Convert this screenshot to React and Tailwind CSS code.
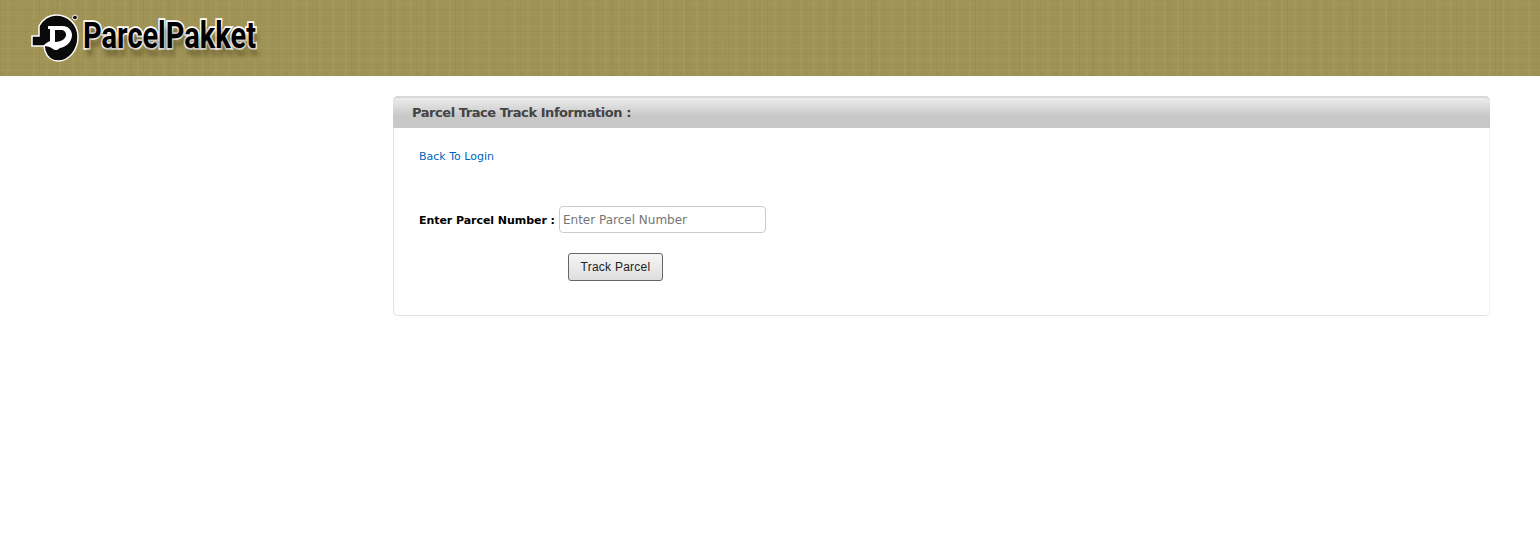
export default function App() {
  return (
    <div className="min-h-[543px] bg-white font-['DejaVu_Sans',sans-serif]">
      <header className="flex h-[76px] items-start bg-[#a09356] bg-[repeating-linear-gradient(90deg,rgba(70,60,20,0.04)_0px,rgba(70,60,20,0.04)_1px,transparent_1px,transparent_7px,rgba(255,245,190,0.04)_7px,rgba(255,245,190,0.04)_9px,transparent_9px,transparent_13px),repeating-linear-gradient(90deg,transparent_0px,transparent_19px,rgba(70,60,20,0.025)_19px,rgba(70,60,20,0.025)_22px,transparent_22px,transparent_37px),repeating-linear-gradient(0deg,rgba(70,60,20,0.04)_0px,rgba(70,60,20,0.04)_1px,transparent_1px,transparent_5px,rgba(255,245,190,0.04)_5px,rgba(255,245,190,0.04)_6px,transparent_6px,transparent_11px)] pl-[31px] pt-[13px]">
        <svg width="50" height="50" viewBox="0 0 50 50" className="shrink-0">
          <circle cx="44" cy="4.5" r="2.4" fill="#111" stroke="#fff" strokeWidth="1" />
          <path
            d="M8 13C12 6 18 2 25 2C37 2 47 11 47 24C47 37 38 48 27 48C21 48 16 44 14 38L13 33H1V23H8Z"
            fill="#0a0a0a"
            stroke="#fff"
            strokeWidth="1.5"
          />
          <path
            d="M17 13H32C37 13 41 17 41 22C41 29 35 34 29 35C27 37 24 38 22 36C20 34 16 33 12 33C15 30 17 29 19 28V16H17Z"
            fill="#fff"
          />
          <path d="M24 17H30C33 17 35 19 35 22C35 25 31 29 24 29Z" fill="#0a0a0a" />
        </svg>
        <span className="mt-[1px] ml-[2px] inline-block origin-left scale-x-[0.805] text-[36px] leading-[44px] font-bold whitespace-nowrap text-black font-['Roboto',sans-serif] [paint-order:stroke_fill] [-webkit-text-stroke:3.5px_#fff] [text-shadow:3px_8px_5px_rgba(50,40,10,0.4)]">
          ParcelPakket
        </span>
      </header>

      <main className="pt-[20px] pr-[50px] pl-[393px]">
        <section className="h-[220px] rounded-[5px] border border-[#e2e2e2] border-r-[#f2f2f2]">
          <h2 className="-mx-px -mt-px h-[32px] rounded-t-[5px] border-t-2 border-[#d8d8d8] bg-[linear-gradient(#ececec,#c8c8c8_60%,#c8c8c8)] pl-[19px] text-[13px] leading-[29px] font-bold tracking-[-0.44px] text-[#444]">
            Parcel Trace Track Information :
          </h2>
          <div className="pl-[25px]">
            <a href="#" className="mt-[22px] block text-[11px] leading-[14px] text-[#0066bb]">
              Back To Login
            </a>
            <div className="mt-[42px] flex items-center">
              <label className="pt-[3px] text-[11px] font-bold tracking-[-0.05px] text-black">Enter Parcel Number :</label>
              <input
                placeholder="Enter Parcel Number"
                className="ml-[4px] h-[27px] w-[207px] rounded-[4px] border border-[#cccccc] px-[3px] text-[12px] outline-none placeholder:text-[#757575]"
              />
            </div>
            <button className="mt-[20px] ml-[149px] block h-[28px] w-[95px] rounded-[3px] border border-[#666] bg-[linear-gradient(#f6f6f6,#dedede)] font-['Liberation_Sans',sans-serif] text-[12px] tracking-[0.25px] text-[#222]">
              Track Parcel
            </button>
          </div>
        </section>
      </main>
    </div>
  );
}
